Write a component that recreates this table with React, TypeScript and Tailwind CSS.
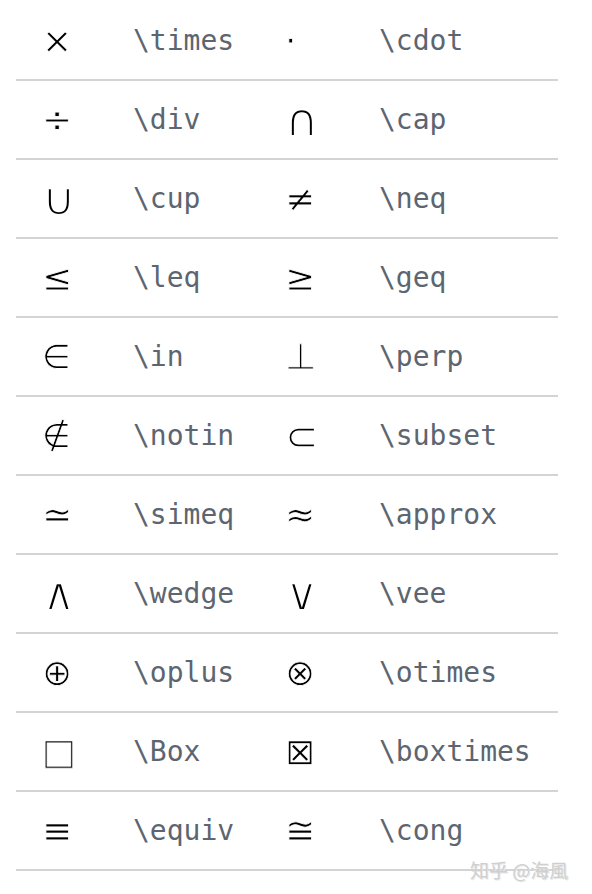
import React from 'react';

const ROWS: [string, string, string, string][] = [
  ['×', '\\times', '·', '\\cdot'],
  ['÷', '\\div', '∩', '\\cap'],
  ['∪', '\\cup', '≠', '\\neq'],
  ['≤', '\\leq', '≥', '\\geq'],
  ['∈', '\\in', '⊥', '\\perp'],
  ['∉', '\\notin', '⊂', '\\subset'],
  ['≃', '\\simeq', '≈', '\\approx'],
  ['∧', '\\wedge', '∨', '\\vee'],
  ['⊕', '\\oplus', '⊗', '\\otimes'],
  ['□', '\\Box', '⊠', '\\boxtimes'],
  ['≡', '\\equiv', '≅', '\\cong'],
];

// DejaVu draws some operators smaller than the KaTeX ones in the picture,
// so those get a bigger size and a thicker white stroke to keep them thin
const SIZE: Record<string, string> = {
  '∪': 'text-[46px] [-webkit-text-stroke:1.8px_white]',
  '∩': 'text-[46px] [-webkit-text-stroke:1.8px_white]',
  '∧': 'text-[46px] [-webkit-text-stroke:1.9px_white]',
  '∨': 'text-[46px] [-webkit-text-stroke:1.9px_white]',
  '⊂': 'text-[40px] [-webkit-text-stroke:1.2px_white]',
  '∈': 'text-[33px] [-webkit-text-stroke:0.8px_white]',
  '∉': 'text-[33px] [-webkit-text-stroke:0.8px_white]',
};

const sym = "text-black font-['DejaVu_Sans',sans-serif] leading-none will-change-transform";
const code = "ml-[2px] text-[28px] text-[#5c6570] font-['DejaVu_Sans_Mono',monospace] leading-none";

function Sym({ c }: { c: string }) {
  return <span className={`${sym} ${SIZE[c] ?? 'text-[36px] [-webkit-text-stroke:0.8px_white]'}`}>{c}</span>;
}

export default function App() {
  return (
    <div className="relative w-[592px] h-[894px] bg-white pt-[2px]">
      <div className="ml-[16px] w-[542px]">
        {ROWS.map((r) => (
          <div
            key={r[1]}
            className="grid grid-cols-[89px_154px_92px_1fr] items-center h-[79px] pl-[26px] border-b-2 border-[#d4d4d4]"
          >
            <Sym c={r[0]} />
            <span className={code}>{r[1]}</span>
            <Sym c={r[2]} />
            <span className={code}>{r[3]}</span>
          </div>
        ))}
      </div>
      {/* watermark */}
      <div className="absolute left-[470px] top-[856px] text-[19px] text-[#cfcfcf] font-['Noto_Sans_CJK_SC',sans-serif] [text-shadow:1px_1px_0_#e8e8e8]">
        知乎 @海風
      </div>
    </div>
  );
}
